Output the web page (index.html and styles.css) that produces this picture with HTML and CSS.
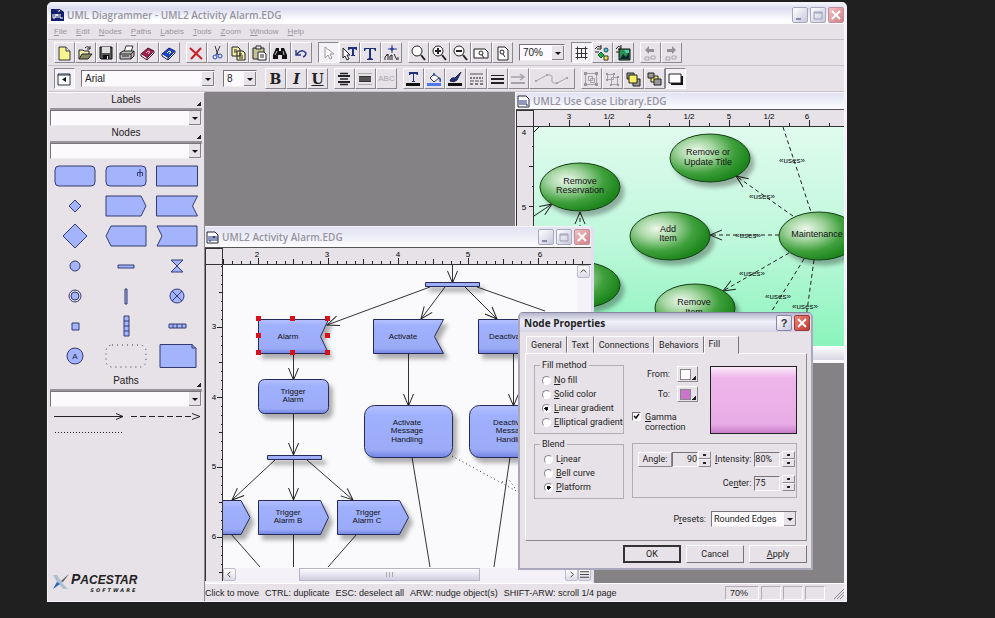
FILE: index.html
```html
<!DOCTYPE html>
<html lang="en">
<head>
  <meta charset="UTF-8">
  <meta name="viewport" content="width=device-width, initial-scale=1.0">
  <title>UML Diagrammer</title>
  <link rel="stylesheet" href="styles.css">
</head>
<body>
  <div class="app">
    <header class="titlebar">
      <svg class="app-icon" viewBox="0 0 13 13"><path fill="#10206c" d="M0 1h9l4 3v9H0z"/><path fill="#fff" d="M3 0l4 3 3-2-2 3z"/><path d="M2 6v4h2V6M5 10V6l1 2 1-2v4M9 6v4h3" fill="none" stroke="#fff"/></svg>
      <h1>UML Diagrammer - UML2 Activity Alarm.EDG</h1>
      <div class="win-buttons">
        <button aria-label="Minimize"><svg viewBox="0 0 14 14"><path d="M3 10h5v2H3z" fill="#888ca8"/></svg></button>
        <button aria-label="Maximize"><svg viewBox="0 0 14 14"><path d="M3 4h8v7H3zM3 5h8" fill="none" stroke="#9a9eb4"/></svg></button>
        <button class="close" aria-label="Close"><svg viewBox="0 0 14 14"><path d="M3 3l8 8M11 3l-8 8" stroke="#fff" stroke-width="2"/></svg></button>
      </div>
    </header>

    <nav class="menubar">
      <button><u>F</u>ile</button>
      <button><u>E</u>dit</button>
      <button><u>N</u>odes</button>
      <button><u>P</u>aths</button>
      <button><u>L</u>abels</button>
      <button><u>T</u>ools</button>
      <button><u>Z</u>oom</button>
      <button><u>W</u>indow</button>
      <button><u>H</u>elp</button>
    </nav>

    <div class="toolbar">
      <div class="group">
        <button aria-label="New"><svg viewBox="0 0 18 18"><path d="M4 3h7l4 4v9H4z" fill="#f8f490" stroke="#333"/><path d="M11 3v4h4" fill="#fff" stroke="#333"/></svg></button>
        <button aria-label="Open"><svg viewBox="0 0 18 18"><path d="M3 15V6h4l1 1h5v3" fill="#f4f0b0" stroke="#222"/><path d="M3 15l3-5h10l-4 5z" fill="#888a60" stroke="#222"/><path d="M9 4q3-3 5 1M14 2v3h-3" fill="none" stroke="#222"/></svg></button>
        <button aria-label="Save"><svg viewBox="0 0 18 18"><path d="M3 3h12v12H4l-1-1z" fill="#555" stroke="#111"/><path d="M5 3h8v6H5z" fill="#ddd"/><path d="M6 11h6v4H6z" fill="#111"/><path d="M10 12h1v3h-1z" fill="#eee"/></svg></button>
        <button aria-label="Print"><svg viewBox="0 0 18 18"><path d="M6 8l2-6h7l-2 6z" fill="#fff" stroke="#333"/><path d="M2 9l3-2h11v5l-3 3H2z" fill="#bbb" stroke="#222"/><path d="M2 10h11v5M13 10l3-3M4 12h7" fill="none" stroke="#222"/></svg></button>
        <button aria-label="Library"><svg viewBox="0 0 18 18"><path d="M2 10l7-6 6 3-7 7z" fill="#a02048" stroke="#501030"/><path d="M2 10v2l6 4v-2M8 16l7-7V7" fill="#fff" stroke="#501030"/><path d="M7 9l2-2 2 1-2 2" fill="none" stroke="#fbd"/></svg></button>
        <button aria-label="Help book"><svg viewBox="0 0 18 18"><path d="M2 10l7-6 6 3-7 7z" fill="#1848c8" stroke="#101868"/><path d="M2 10v2l6 4v-2M8 16l7-7V7" fill="#fff" stroke="#101868"/><path d="M7 9l2-2 2 1-2 2" fill="none" stroke="#ff8"/></svg></button>
      </div>
      <div class="group">
        <button aria-label="Delete"><svg viewBox="0 0 18 18"><path d="M3 4l12 11M14 4L4 15" stroke="#c82028" stroke-width="2"/></svg></button>
        <button aria-label="Cut"><svg viewBox="0 0 18 18"><path d="M7 2l3 9M12 2L8 11" stroke="#334" fill="none"/><circle cx="7" cy="13" r="2" fill="none" stroke="#2048c0"/><circle cx="12" cy="12" r="2" fill="none" stroke="#2048c0"/></svg></button>
        <button aria-label="Copy"><svg viewBox="0 0 18 18"><path d="M3 3h6l2 2v7H3zM8 7h6l2 2v7H8z" fill="#f5efa5" stroke="#222"/><path d="M5 6h3M5 8h3M10 10h3M10 12h4M10 14h4" stroke="#222"/></svg></button>
        <button aria-label="Paste"><svg viewBox="0 0 18 18"><path d="M3 4h11v11H3z" fill="#c9c497" stroke="#222"/><path d="M6 2h5v3H6z" fill="#eee" stroke="#222"/><path d="M8 8h6l2 2v6H8z" fill="#fff" stroke="#222"/><path d="M10 11h4M10 13h4" stroke="#222"/></svg></button>
        <button aria-label="Find"><svg viewBox="0 0 18 18"><path d="M5 4h3v3h2V4h3l3 7v4h-5v-4H7v4H2v-4z" fill="#111"/><path d="M4 11l2-4M13 11l-1-4" stroke="#bbb"/></svg></button>
        <button aria-label="Undo"><svg viewBox="0 0 18 18"><path d="M5 10q5-6 9-1 0 3-3 4M4 6v5h5" fill="none" stroke="#28368c" stroke-width="1.4"/></svg></button>
      </div>
      <div class="group">
        <button class="on" aria-label="Select"><svg viewBox="0 0 18 18"><path d="M6 3v11l3-3 2 4 2-1-2-4h4z" fill="#fff" stroke="#999"/></svg></button>
        <button aria-label="Select text"><svg viewBox="0 0 18 18"><path d="M3 4v10l2-2 2 4 2-1-2-4h3z" fill="#fff" stroke="#222"/><path d="M8 3h9v3h-1l-1-1h-1v6h1v1h-4v-1h1V5h-2L9 6H8z" fill="#20307c"/></svg></button>
        <button aria-label="Text"><svg viewBox="0 0 18 18"><path d="M3 4h12v3h-1l-1-2h-3v9l2 1v1H6v-1l2-1V5H5L4 7H3z" fill="#20307c"/></svg></button>
        <button aria-label="Hot point"><svg viewBox="0 0 18 18"><path d="M10 1v8M6 5h9" stroke="#28368c"/><path d="M8 5l2-2 2 2-2 2z" fill="#28368c"/><path d="M3 16v-3l3-3v6M8 16v-4l2-1v5M12 10l3 6M5 10v2M16 13v3" fill="none" stroke="#222"/></svg></button>
      </div>
      <div class="group">
        <button aria-label="Zoom"><svg viewBox="0 0 18 18"><circle cx="8" cy="7" r="5" fill="#fff" stroke="#222"/><path d="M12 11l4 5" stroke="#222" stroke-width="2"/></svg></button>
        <button aria-label="Zoom in"><svg viewBox="0 0 18 18"><circle cx="8" cy="7" r="5" fill="#fff" stroke="#222"/><path d="M12 11l4 5M5 7h6M8 4v6" stroke="#222" stroke-width="2"/></svg></button>
        <button aria-label="Zoom out"><svg viewBox="0 0 18 18"><circle cx="8" cy="7" r="5" fill="#fff" stroke="#222"/><path d="M12 11l4 5M5 7h6" stroke="#222" stroke-width="2"/></svg></button>
        <button aria-label="Fit width"><svg viewBox="0 0 18 18"><path d="M2 5h11l3 3v6H2z" fill="#fff" stroke="#222"/><circle cx="9" cy="9" r="2" fill="none" stroke="#222"/><path d="M10 11l2 3" stroke="#222"/></svg></button>
        <button aria-label="Fit page"><svg viewBox="0 0 18 18"><path d="M5 3h7l3 3v10H5z" fill="#fff" stroke="#222"/><circle cx="9" cy="8" r="2" fill="none" stroke="#222"/><path d="M10 10l2 3" stroke="#222"/></svg></button>
      </div>
      <select class="combo zoom-combo" aria-label="Zoom level"><option>70%</option></select>
      <div class="group">
        <button class="on" aria-label="Grid"><svg viewBox="0 0 18 18"><path d="M3.500 4.500h12M3.500 9.500h12M3.500 13.500h12M5.500 2.500v13M9.500 4.500v9M13.500 2.500v13" fill="none" stroke="#333"/></svg></button>
        <button aria-label="Node style"><svg viewBox="0 0 18 18"><path d="M2 5q2-4 6-2M8 1v4H4M2 8h4" fill="none" stroke="#222"/><path d="M8 8l3 3-3 3-3-3z" fill="#28b040" stroke="#063"/><circle cx="13" cy="6" r="2" fill="#50c8e0" stroke="#245"/><path d="M11 12h4v4h-4z" fill="#f8ec50" stroke="#333"/></svg></button>
        <button aria-label="Picture"><svg viewBox="0 0 18 18"><path d="M5 5h11v11H5z" fill="#2c9050" stroke="#111"/><path d="M6 15l3-5 3 3 3-5v7z" fill="#123"/><path d="M10 6h5v3h-3z" fill="#58c8b0"/><path d="M2 5q2-4 5-2M7 1v4H4M2 8h3" fill="none" stroke="#222"/></svg></button>
      </div>
      <div class="group">
        <button aria-label="Previous"><svg viewBox="0 0 18 18"><path d="M4 6l4-4v3h5v3H8v2z" fill="#929099"/><path d="M4 13h4v3H4zM10 12h4v3h-4z" fill="none" stroke="#aaa7b0"/></svg></button>
        <button aria-label="Next"><svg viewBox="0 0 18 18"><path d="M14 6l-4-4v3H5v3h5v2z" fill="#929099"/><path d="M4 13h4v3H4zM10 12h4v3h-4z" fill="none" stroke="#aaa7b0"/></svg></button>
      </div>
    </div>

    <div class="toolbar format">
      <button class="on" aria-label="Toggle panel"><svg viewBox="0 0 18 18"><path d="M3 4h12v11H3zM3 5h12" fill="#fff" stroke="#234"/><path d="M11 7v5l-4-2.500z" fill="#111"/></svg></button>
      <select class="combo font-combo" aria-label="Font"><option>Arial</option></select>
      <select class="combo size-combo" aria-label="Font size"><option>8</option></select>
      <div class="group">
        <button class="glyph"><b>B</b></button>
        <button class="glyph"><i>I</i></button>
        <button class="glyph"><u>U</u></button>
      </div>
      <div class="group">
        <button aria-label="Center"><svg viewBox="0 0 18 18"><path d="M3 6h12M3 12h12" stroke="#222" stroke-width="2"/><path d="M5 3.500h8M5 9h8M5 14.500h8" stroke="#222" stroke-width="1.500"/></svg></button>
        <button aria-label="Middle"><svg viewBox="0 0 18 18"><path d="M3 6h12v6H3z" fill="#333"/><path d="M3 8h12M3 10h12" stroke="#777"/><path d="M2 3.500h14M2 14.500h14" stroke="#aaa"/></svg></button>
        <button class="glyph small" disabled>ABC</button>
      </div>
      <div class="group">
        <button aria-label="Text color"><svg viewBox="0 0 18 18"><path d="M5 2h9v3h-1l-1-1h-2v7h1v1H8v-1h1V4H7L6 5H5z" fill="#20307c"/><path d="M2 13h14v3H2z" fill="#111"/></svg></button>
        <button aria-label="Fill color"><svg viewBox="0 0 18 18"><path d="M5 8l4-4 5 4-5 4z" fill="#fff" stroke="#335"/><path d="M9 6V3M14 8q2 1 1 4" fill="none" stroke="#2850b0" stroke-width="1.500"/><path d="M2 13h14v3H2z" fill="#5078e8"/></svg></button>
        <button aria-label="Line color"><svg viewBox="0 0 18 18"><path d="M4 11q1-4 5-3l6-6-4 8q-3 3-7 1z" fill="#20307c" stroke="#224"/><path d="M2 13h14v3H2z" fill="#111"/></svg></button>
        <button aria-label="Line style"><svg viewBox="0 0 18 18"><path d="M3 4h13" stroke="#555"/><path d="M3 8h13" stroke="#555" stroke-width="1.500" stroke-dasharray="2 1"/><path d="M3 11h13" stroke="#555" stroke-dasharray="4 1"/><path d="M3 14h13" stroke="#555" stroke-width="1.500" stroke-dasharray="3 2"/></svg></button>
        <button aria-label="Line width"><svg viewBox="0 0 18 18"><path d="M3 5.500h13" stroke="#222"/><path d="M3 9h13M3 13h13" stroke="#222" stroke-width="2"/></svg></button>
        <button aria-label="Arrow"><svg viewBox="0 0 18 18"><path d="M2 7h12M11 4l4 3-4 3" fill="none" stroke="#a5a2aa" stroke-width="1.500"/><path d="M2 13h14" stroke="#a5a2aa" stroke-width="2"/></svg></button>
        <button class="wide" aria-label="Curve"><svg viewBox="0 0 44 18"><path d="M6 11L17 5Q23 4 22 9T27 13L37 8" fill="none" stroke="#a5a2aa"/><path d="M5 10h2v2H5zM16 4h2v2h-2zM26 12h2v2h-2zM36 7h2v2h-2z" fill="#a5a2aa"/></svg></button>
      </div>
      <div class="group">
        <button aria-label="Group"><svg viewBox="0 0 18 18"><path d="M3.500 3.500h11v11h-11zM6.500 6.500h4v4h-4zM8.500 8.500h4v4h-4z" fill="none" stroke="#a5a2aa"/><path d="M2 2h3v3H2zM13 2h3v3h-3zM2 13h3v3H2zM13 13h3v3h-3z" fill="#98959d"/></svg></button>
        <button aria-label="Ungroup"><svg viewBox="0 0 18 18"><path d="M4.500 4.500h6v5h-6zM8.500 7.500h6v7h-6z" fill="none" stroke="#a5a2aa"/><path d="M3 3h2v2H3zM10 3h2v2h-2zM3 9h2v2H3zM14 14h2v2h-2zM7 14h2v2H7zM14 6h2v2h-2z" fill="#98959d"/></svg></button>
        <button aria-label="Bring to front"><svg viewBox="0 0 18 18"><path d="M3 3h7v6H3zM9 9h7v7H9z" fill="#999" stroke="#222"/><path d="M5 5h8v8H5z" fill="#f8f060" stroke="#222"/></svg></button>
        <button aria-label="Send to back"><svg viewBox="0 0 18 18"><path d="M6 6h7v6H6z" fill="#f8f060" stroke="#222"/><path d="M3 3h6v5H3zM9 9h7v6H9z" fill="#999" stroke="#222"/></svg></button>
        <button class="on" aria-label="Shadow"><svg viewBox="0 0 18 18"><path d="M5 6h12v9H5z" fill="#111"/><path d="M3 4h12v9H3z" fill="#fff" stroke="#222"/></svg></button>
      </div>
    </div>

    <div class="main">
      <aside class="sidebar">
        <h2>Labels</h2>
        <select class="combo" aria-label="Labels"><option></option></select>
        <h2>Nodes</h2>
        <select class="combo" aria-label="Nodes"><option></option></select>
        <div class="palette">
          <svg viewBox="0 0 42 22"><rect x="1" y="1" width="40" height="20" rx="4"/></svg>
          <svg viewBox="0 0 42 22"><rect x="1" y="1" width="40" height="20" rx="4"/><path class="line" d="M32.500 11V7.500h5V11M35 12V4"/></svg>
          <svg viewBox="0 0 42 22"><path d="M.5 1h41v20H.5z"/></svg>

          <svg viewBox="0 0 42 22"><path d="M21 5l6 6-6 6-6-6z"/></svg>
          <svg viewBox="0 0 42 22"><path d="M1 1h35l5 10-5 10H1z"/></svg>
          <svg viewBox="0 0 42 22"><path d="M.5 1h41l-5 10 5 10H.5z"/></svg>

          <svg viewBox="0 0 42 24"><path d="M21 0l12 12-12 12L9 12z"/></svg>
          <svg viewBox="0 0 42 22"><path d="M41 1H6L1 11l5 10h35z"/></svg>
          <svg viewBox="0 0 42 22"><path d="M1 1h40v20H1l5-10z"/></svg>

          <svg viewBox="0 0 42 22"><circle cx="21" cy="11" r="5"/></svg>
          <svg viewBox="0 0 42 22"><path d="M13 10h16v3H13z"/></svg>
          <svg viewBox="0 0 42 22"><path d="M15 5h12L15 17h12z"/></svg>

          <svg viewBox="0 0 42 22"><circle class="hollow" cx="21" cy="11" r="6"/><circle cx="21" cy="11" r="4"/></svg>
          <svg viewBox="0 0 42 22"><path d="M20 4h2v15h-2z"/></svg>
          <svg viewBox="0 0 42 22"><circle cx="21" cy="11" r="7"/><path class="line" d="M16 6l10 10M26 6L16 16"/></svg>

          <svg viewBox="0 0 42 22"><path d="M18 8h7v7h-7z"/></svg>
          <svg viewBox="0 0 42 22"><path d="M19 1h5v20h-5zM19 6h5M19 11h5M19 16h5"/></svg>
          <svg viewBox="0 0 42 22"><path d="M13 9h17v4H13zM17 9v4M21 9v4M26 9v4"/></svg>

          <svg viewBox="0 0 42 24"><circle cx="21" cy="12" r="8"/><text x="21" y="15">A</text></svg>
          <svg viewBox="0 0 42 24"><rect class="dotted" x="1" y="1" width="40" height="22" rx="6"/></svg>
          <svg viewBox="0 0 42 24"><path d="M4 .5h32l4 4v19H4z"/><path class="line" d="M36 0v4h4"/></svg>
        </div>
        <h2>Paths</h2>
        <select class="combo" aria-label="Paths"><option></option></select>
        <svg class="paths" viewBox="0 0 152 30">
          <path d="M4 9.500h69M66 6.500l7 3-7 3"/>
          <path d="M81 9.500h63" stroke-dasharray="6 3"/><path d="M142 6.500l8 3-8 3"/>
          <path d="M5 25.500h67" stroke-dasharray="1 2"/>
        </svg>
        <div class="logo">
          <svg viewBox="0 0 18 18"><path d="M1 3h4l4 6 8-7-7 9 6 6h-5l-4-5-6 5 4-7z" fill="#aebfd0"/><path d="M5 10L1 17l7-5z" fill="#2868b0"/><path d="M9 9l8-7-6 8z" fill="#666"/></svg>
          <div>
            <strong>P<small>ACESTAR</small></strong>
            <em>SOFTWARE</em>
          </div>
        </div>
      </aside>

      <div class="content">
        <div class="workspace">

          <section class="window usecase">
            <header class="win-title">
              <svg class="doc-icon" viewBox="0 0 13 13"><path d="M1 1h8l3 3v8H1z" fill="#fff" stroke="#223"/><path d="M3 5v5M5 5v5M7 5v5M9 5v5h2" fill="none" stroke="#20307c"/></svg>
              <h3>UML2 Use Case Library.EDG</h3>
            </header>
            <div class="win-body">
              <div class="corner"></div>
              <svg class="ruler-h" width="310" height="16">
                <defs><pattern id="uh" x="35" width="80" height="16" patternUnits="userSpaceOnUse"><path d="M.5 10v6M20.500 13v3M40.500 10v6M60.500 13v3" stroke="#222"/></pattern></defs>
                <rect width="310" height="16" fill="url(#uh)"/>
                <text x="35" y="9">3</text><text x="75" y="9">1/2</text><text x="115" y="9">4</text><text x="155" y="9">1/2</text><text x="195" y="9">5</text><text x="235" y="9">1/2</text><text x="273" y="9">6</text>
              </svg>
              <svg class="ruler-v" width="18" height="219">
                <defs><pattern id="uv" y="-1" width="18" height="80" patternUnits="userSpaceOnUse"><path d="M12 .5h6M15 20.500h3M12 40.500h6M15 60.500h3" stroke="#222"/></pattern></defs>
                <rect width="18" height="219" fill="url(#uv)"/>
                <text x="7" y="8">4</text><text x="7" y="83">5</text>
              </svg>
              <div class="canvas mint">
                <svg width="310" height="219" viewBox="534 127 310 219">
                  <defs>
                    <radialGradient id="leaf" cx=".33" cy=".35" r=".72"><stop offset="0" stop-color="#edf8ec"/><stop offset=".3" stop-color="#a9d8a6"/><stop offset=".65" stop-color="#3fa03c"/><stop offset="1" stop-color="#178017"/></radialGradient>
                    <filter id="soft" x="-20%" y="-20%" width="150%" height="160%"><feDropShadow dx="4" dy="5" stdDeviation="2" flood-color="#000" flood-opacity=".3"/></filter>
                    <marker id="tip" viewBox="0 0 14 12" refX="13" refY="6" markerWidth="14" markerHeight="12" markerUnits="userSpaceOnUse" orient="auto"><path d="M1 1l12 5-12 5" fill="none" stroke="#222"/></marker>
                  </defs>
                  <g class="dashed" marker-end="url(#tip)">
                    <path d="M793 216L736 176"/><path d="M779 235h-69"/><path d="M789 253L723 291"/><path d="M580 250V212"/>
                  </g>
                  <g class="dashed"><path d="M783 127L811 212"/><path d="M804 259L765 322"/><path d="M814 260L805 325"/></g>
                  <path d="M534 216L552 204" stroke="#222" marker-end="url(#tip)"/><path d="M534 132l5-5" stroke="#222"/>
                  <g fill="url(#leaf)" stroke="#173d17" filter="url(#soft)">
                    <ellipse cx="580" cy="187" rx="40" ry="24"/><ellipse cx="710" cy="158" rx="40" ry="24"/>
                    <ellipse cx="670" cy="236" rx="40" ry="24"/><ellipse cx="819" cy="236" rx="40" ry="24"/>
                    <ellipse cx="580" cy="285" rx="40" ry="23"/><ellipse cx="695" cy="308" rx="40" ry="24"/>
                  </g>
                  <g class="labels">
                    <text x="580" y="184">Remove</text><text x="580" y="193">Reservation</text>
                    <text x="708" y="155">Remove or</text><text x="708" y="165">Update Title</text>
                    <text x="668" y="232">Add</text><text x="668" y="241">Item</text>
                    <text x="817" y="237">Maintenance</text><text x="694" y="305">Remove</text><text x="694" y="315">Item</text>
                  </g>
                  <g class="labels uses">
                    <text x="792" y="163">«uses»</text><text x="762" y="199">«uses»</text><text x="748" y="238">«uses»</text>
                    <text x="752" y="276">«uses»</text><text x="778" y="299">«uses»</text><text x="805" y="309">«uses»</text>
                  </g>
                </svg>
              </div>
            </div>
            <div class="win-foot"></div>
          </section>

          <section class="window activity">
            <header class="win-title">
              <svg class="doc-icon" viewBox="0 0 13 13"><path d="M1 1h8l3 3v8H1z" fill="#fff" stroke="#223"/><path d="M3 5v5h2V5M7 10V5l1 2 1-2v5M11 5v5" fill="none" stroke="#20307c"/></svg>
              <h3>UML2 Activity Alarm.EDG</h3>
              <div class="win-buttons">
                <button aria-label="Minimize"><svg viewBox="0 0 14 14"><path d="M3 10h5v2H3z" fill="#888ca8"/></svg></button>
                <button aria-label="Maximize"><svg viewBox="0 0 14 14"><path d="M3 4h8v7H3zM3 5h8" fill="none" stroke="#9a9eb4"/></svg></button>
                <button class="close" aria-label="Close"><svg viewBox="0 0 14 14"><path d="M3 3l8 8M11 3l-8 8" stroke="#fff" stroke-width="2"/></svg></button>
              </div>
            </header>
            <div class="win-body">
              <div class="corner"></div>
              <svg class="ruler-h" width="368" height="16">
                <defs><pattern id="ah" x="35" width="70" height="16" patternUnits="userSpaceOnUse"><path d="M.5 10v6M9.500 13v3M18.500 13v3M27.500 13v3M35.500 11v5M44.500 13v3M53.500 13v3M62.500 13v3" stroke="#222"/></pattern></defs>
                <rect width="368" height="16" fill="url(#ah)"/>
                <text x="34" y="9">2</text><text x="104" y="9">3</text><text x="175" y="9">4</text><text x="245" y="9">5</text><text x="317" y="9">6</text>
              </svg>
              <svg class="ruler-v" width="18" height="316">
                <defs><pattern id="av" y="62" width="18" height="70" patternUnits="userSpaceOnUse"><path d="M11 .5h7M15 9.500h3M15 18.500h3M15 27.500h3M13 35.500h5M15 44.500h3M15 53.500h3M15 62.500h3" stroke="#222"/></pattern></defs>
                <rect width="18" height="316" fill="url(#av)"/>
                <text x="8" y="64">3</text><text x="8" y="135">4</text><text x="8" y="204">5</text><text x="8" y="274">6</text>
              </svg>
              <div class="canvas scrolled">
                <svg width="354" height="302" viewBox="223 265 354 302">
                  <defs>
                    <linearGradient id="blue" x2="0" y2="1"><stop offset="0" stop-color="#b4c0ff"/><stop offset=".2" stop-color="#9fb0fc"/><stop offset=".85" stop-color="#9babf8"/><stop offset="1" stop-color="#7284e0"/></linearGradient>
                    <marker id="head" viewBox="0 0 14 12" refX="13" refY="6" markerWidth="14" markerHeight="12" markerUnits="userSpaceOnUse" orient="auto"><path d="M1 1l12 5-12 5" fill="none" stroke="#222"/></marker>
                  </defs>
                  <g class="flow" marker-end="url(#head)">
                    <path d="M452.500 265V283"/><path d="M430 287L327 325"/><path d="M445 287L421 319"/><path d="M465 287L497 319"/>
                    <path d="M293.500 354V380"/><path d="M293.500 414V455"/><path d="M275 460L232 500"/><path d="M293.500 460V500"/><path d="M307 460L353 500"/>
                    <path d="M408.500 354V406"/><path d="M513.500 354V406"/>
                  </g>
                  <g class="flow">
                    <path d="M477 287L545 311M231 534L260 567M293.500 534V567M357 534L328 567M412 457L430 567M510 457L494 567"/>
                    <path d="M452 456L520 493M502 482l7-2 6 8" stroke-dasharray="1 3"/>
                  </g>
                  <g fill="url(#blue)" stroke="#252a58" filter="url(#soft)">
                    <path d="M425.500 282.500h54v4h-54z"/><path d="M267.500 455.500h54v4h-54z"/>
                    <path d="M258.500 319.500h70l-8 17 8 17h-70z"/><path d="M373.500 319.500h70l-9 17 9 17h-70z"/><path d="M478.500 319.500h70l-9 17 9 17h-70z"/>
                    <rect x="258.500" y="379.500" width="70" height="34" rx="6"/>
                    <rect x="364.500" y="405.500" width="88" height="52" rx="10"/><rect x="469.500" y="405.500" width="88" height="52" rx="10"/>
                    <path d="M200 500.500h41l9 17-9 17h-41z"/><path d="M258.500 500.500h62l8 17-8 17h-62z"/><path d="M337.500 500.500h62l9 17-9 17h-62z"/>
                  </g>
                  <g class="labels">
                    <text x="288" y="339">Alarm</text><text x="403" y="339">Activate</text><text x="508" y="339">Deactivate</text>
                    <text x="293" y="394">Trigger</text><text x="293" y="402">Alarm</text>
                    <text x="407" y="425">Activate</text><text x="407" y="433">Message</text><text x="407" y="442">Handling</text>
                    <text x="512" y="425">Deactivate</text><text x="512" y="433">Message</text><text x="512" y="442">Handling</text>
                    <text x="288" y="515">Trigger</text><text x="288" y="523">Alarm B</text>
                    <text x="368" y="515">Trigger</text><text x="367" y="523">Alarm C</text>
                  </g>
                  <path class="handles" d="M256 316h5v5h-5zM290 316h5v5h-5zM325 316h5v5h-5zM256 333h5v5h-5zM325 333h5v5h-5zM256 350h5v5h-5zM290 350h5v5h-5zM325 350h5v5h-5z"/>
                </svg>
                <div class="vscroll"><button aria-label="Scroll up"><svg viewBox="0 0 12 12"><path d="M3 7l3-3 3 3" /></svg></button></div>
                <div class="hscroll">
                  <button aria-label="Scroll left"><svg viewBox="0 0 12 12"><path d="M7 3L4 6l3 3"/></svg></button>
                  <div class="track"><div class="thumb"></div></div>
                  <button aria-label="Scroll right"><svg viewBox="0 0 12 12"><path d="M5 3l3 3-3 3"/></svg></button>
                  <button aria-label="Pages"><svg viewBox="0 0 12 12"><path d="M1 3h10M1 6h10M1 9h10"/></svg></button>
                </div>
              </div>
            </div>
          </section>

          <form class="dialog">
            <header class="dialog-title">
              <h3>Node Properties</h3>
              <div class="win-buttons">
                <button type="button" class="help">?</button>
                <button type="button" class="close" aria-label="Close"><svg viewBox="0 0 14 14"><path d="M3 3l8 8M11 3l-8 8" stroke="#fff" stroke-width="2"/></svg></button>
              </div>
            </header>
            <div class="tabs">
              <button type="button">General</button>
              <button type="button">Text</button>
              <button type="button">Connections</button>
              <button type="button">Behaviors</button>
              <button type="button" class="active">Fill</button>
            </div>
            <div class="panel">
              <div class="left">
                <fieldset>
                  <legend>Fill method</legend>
                  <label><input type="radio" name="fill"><span><u>N</u>o fill</span></label>
                  <label><input type="radio" name="fill"><span><u>S</u>olid color</span></label>
                  <label><input type="radio" name="fill" checked><span><u>L</u>inear gradient</span></label>
                  <label><input type="radio" name="fill"><span><u>E</u>lliptical gradient</span></label>
                </fieldset>
                <fieldset>
                  <legend>Blend</legend>
                  <label><input type="radio" name="blend"><span>L<u>i</u>near</span></label>
                  <label><input type="radio" name="blend"><span><u>B</u>ell curve</span></label>
                  <label><input type="radio" name="blend" checked><span><u>P</u>latform</span></label>
                </fieldset>
              </div>
              <div class="right">
                <div class="colors">
                  <div class="pickers">
                    <div class="pick"><label for="from">From:</label><button type="button" id="from"><span class="swatch"></span></button></div>
                    <div class="pick"><label for="to">To:</label><button type="button" id="to"><span class="swatch orchid"></span></button></div>
                    <label class="gamma"><input type="checkbox" checked><span><u>G</u>amma<br>correction</span></label>
                  </div>
                  <div class="preview"></div>
                </div>
                <div class="numbers">
                  <div class="angle"><button type="button" class="angle-button">Angle:</button><input type="text" value="90" aria-label="Angle"><span class="spin"><button type="button" aria-label="Up"></button><button type="button" aria-label="Down"></button></span></div>
                  <div class="field"><label for="intensity"><u>I</u>ntensity:</label><input id="intensity" type="text" value="80%"><span class="spin"><button type="button" aria-label="Up"></button><button type="button" aria-label="Down"></button></span></div>
                  <div class="field"><label for="center">Ce<u>n</u>ter:</label><input id="center" type="text" value="75"><span class="spin"><button type="button" aria-label="Up"></button><button type="button" aria-label="Down"></button></span></div>
                </div>
                <div class="presets">
                  <label for="presets">P<u>r</u>esets:</label>
                  <select id="presets" class="combo"><option>Rounded Edges</option></select>
                </div>
              </div>
            </div>
            <div class="actions">
              <button type="button" class="default">OK</button>
              <button type="button">Cancel</button>
              <button type="button"><u>A</u>pply</button>
            </div>
          </form>
        </div>

        <footer class="status">
          <span>Click to move</span><span>CTRL: duplicate</span><span>ESC: deselect all</span><span>ARW: nudge object(s)</span><span>SHIFT-ARW: scroll 1/4 page</span>
          <span class="cell percent">70%</span><span class="cell"></span><span class="cell"></span><span class="cell"></span>
          <svg class="grip" viewBox="0 0 12 12"><path d="M2 12L12 2M5 12l7-7M8 12l4-4" stroke="#8c8890"/></svg>
        </footer>
      </div>
    </div>
  </div>
</body>
</html>
```
FILE: styles.css
```css
:root {
  --face: #e7e2e8;
  --text: #222;
  --ui: Roboto, "Liberation Sans", sans-serif;
}

* {
  margin: 0;
  padding: 0;
  box-sizing: border-box;
}

body {
  font-family: "Liberation Sans", Arial, sans-serif;
  font-size: 9px;
  color: var(--text);
  background: #202020;
  min-height: 100vh;
  padding: 2px 148px 16px 47px;
  display: flex;
}

button, select, input {
  font: inherit;
  color: inherit;
}

svg {
  display: block;
}

.app {
  flex: 1;
  min-width: 0;
  display: flex;
  flex-direction: column;
  background: var(--face);
  border: 1px solid #f6f4fa;
  border-right: 3px solid #f6f4fa;
  border-radius: 5px 5px 0 0;
}

/* title bars */
.titlebar {
  display: flex;
  align-items: center;
  gap: 3px;
  height: 21px;
  padding: 2px 0 0 3px;
  background: linear-gradient(#f4f4fc, #dcdcf0 25%, #fdfdff 80%);
  border-radius: 5px 5px 0 0;
}

.app-icon, .doc-icon {
  width: 13px;
  height: 13px;
}

h1, h3 {
  flex: 1;
  font-family: "Open Sans", sans-serif;
  font-size: 10px;
  font-weight: 600;
  color: #96949e;
  white-space: nowrap;
}

.win-buttons {
  display: flex;
  gap: 2px;
}

.win-buttons button {
  width: 16px;
  height: 16px;
  border: 1px solid #a8a8bc;
  border-radius: 2px;
  background: linear-gradient(135deg, #fff, #c8c8dc);
}

.win-buttons .close {
  border-color: #c09098;
  background: linear-gradient(135deg, #f0c0c0, #d08088);
}

/* menu */
.menubar {
  display: flex;
  gap: 9px;
  height: 16px;
  padding: 0 6px;
  font-size: 8px;
  border-bottom: 1px solid #c4c0c8;
}

.menubar button {
  border: 0;
  background: none;
  color: #9a969f;
}

/* toolbars */
.toolbar {
  display: flex;
  align-items: center;
  gap: 6px;
  height: 26px;
  padding-left: 6px;
  border-bottom: 1px solid #c8c4cc;
}

.toolbar .group {
  display: flex;
}

.toolbar button {
  width: 21px;
  height: 21px;
  border: 1px solid;
  border-color: #fff #8c8890 #8c8890 #fff;
  background: var(--face);
}

.toolbar button svg {
  width: 18px;
  height: 18px;
}

.toolbar .on {
  border-color: #8c8890 #fff #fff #8c8890;
  background: #f4f2f6;
}

.toolbar .wide {
  width: 46px;
}

.toolbar .wide svg {
  width: 44px;
}

.toolbar .glyph {
  font-family: "DejaVu Serif", serif;
  font-size: 14px;
  font-weight: 700;
  line-height: 18px;
}

.toolbar .small {
  font-family: "Liberation Sans", sans-serif;
  font-size: 8px;
  font-weight: 400;
  color: #aaa7b0;
}

.combo {
  appearance: none;
  height: 16px;
  padding-left: 3px;
  border: 1px solid;
  border-color: #77737b #eee #eee #77737b;
  border-radius: 0;
  background: #fcfafc url("data:image/svg+xml,%3Csvg xmlns='http://www.w3.org/2000/svg' width='12' height='14'%3E%3Cpath d='M0 0h12v14H0z' fill='%23e7e2e8'/%3E%3Cpath d='M11.500 0v13.500H0' fill='none' stroke='%23848088'/%3E%3Cpath d='M3 6h6L6 9z' fill='%23111'/%3E%3C/svg%3E") no-repeat right center;
}

.toolbar .combo {
  height: 17px;
  font-size: 10px;
}

.zoom-combo {
  width: 46px;
}

.font-combo {
  width: 134px;
}

.size-combo {
  width: 34px;
  margin: 0 2px;
}

.main {
  flex: 1;
  display: flex;
}

/* sidebar */
.sidebar {
  width: 157px;
  display: flex;
  flex-direction: column;
  padding: 0 2px 2px;
  border-top: 1px solid #fff;
  border-right: 1px solid #8c8890;
}

.sidebar h2 {
  height: 17px;
  font-size: 10px;
  font-weight: 400;
  line-height: 14px;
  text-align: center;
  border-bottom: 2px solid #98949c;
  background: linear-gradient(135deg, transparent 50%, #222 50%) no-repeat right 1px bottom 2px / 4px 4px;
}

.sidebar .combo {
  width: 100%;
}

.palette {
  display: grid;
  grid-template-columns: repeat(3, 1fr);
  grid-auto-rows: 30px;
  align-items: center;
  justify-items: center;
  padding: 2px 0 3px;
}

.palette svg {
  width: 42px;
  fill: #a3b4fc;
  stroke: #353a70;
}

.palette .hollow, .palette .line, .palette .dotted {
  fill: none;
}

.palette .dotted {
  stroke: #333;
  stroke-dasharray: 1 4;
}

.palette text {
  fill: #223;
  stroke: none;
  font-size: 8px;
  text-anchor: middle;
}

.paths {
  width: 152px;
  height: 30px;
  fill: none;
  stroke: #222;
}

.logo {
  display: flex;
  gap: 1px;
  margin-top: auto;
  padding: 0 0 5px 2px;
}

.logo svg {
  width: 18px;
  height: 18px;
}

.logo strong, .logo em {
  display: block;
  font-style: italic;
}

.logo strong {
  font-size: 14px;
  line-height: 14px;
}

.logo small {
  font-size: 12px;
}

.logo em {
  font-family: "DejaVu Sans", sans-serif;
  font-size: 5px;
  font-weight: 700;
  line-height: 7px;
  text-align: right;
  letter-spacing: 2px;
}

/* workspace */
.content {
  flex: 1;
  min-width: 0;
  display: flex;
  flex-direction: column;
}

.workspace {
  position: relative;
  flex: 1;
  overflow: hidden;
  background: #848284;
}

.window {
  position: absolute;
  display: flex;
  flex-direction: column;
  background: #eceaf2;
  border: 1px solid #f4f4fa;
}

.win-title {
  display: flex;
  align-items: center;
  gap: 3px;
  height: 20px;
  padding: 0 1px;
  background: linear-gradient(#e2e2f2, #fcfcff);
}

.usecase {
  left: 310px;
  top: 0;
  right: 0;
  border-right: 0;
}

.usecase .win-title {
  height: 16px;
}

.activity {
  left: -1px;
  top: 134px;
  bottom: 0;
  width: 390px;
  border-radius: 0 5px 0 0;
  border-right: 3px solid #e2e0ee;
}

.win-body {
  flex: 1;
  display: grid;
  grid-template: 17px 1fr / 18px 1fr;
  border-top: 1px solid #555;
  overflow: hidden;
}

.corner {
  background: var(--face);
  border: 1px solid #333;
}

.ruler-h {
  width: 100%;
  height: 17px;
  background: var(--face);
  border-bottom: 1px solid #333;
}

.ruler-v {
  background: var(--face);
  border: solid #333;
  border-width: 0 1px;
}

.ruler-h text, .ruler-v text {
  font-size: 8px;
  text-anchor: middle;
}

.canvas {
  overflow: hidden;
}

.mint {
  background: linear-gradient(#e0fbee, #c0f8dc 50%, #8af4bc);
}

.scrolled {
  display: grid;
  grid-template: 1fr 14px / 1fr 14px;
  background: #fafafc;
}

.dashed {
  fill: none;
  stroke: #222;
}

.dashed path {
  stroke-dasharray: 4 3;
}

.flow {
  fill: none;
  stroke: #333;
}

.labels {
  font-size: 8px;
  text-anchor: middle;
  fill: #111;
}

.mint .labels {
  font-size: 9px;
}

.mint .uses {
  font-size: 8px;
}

.handles {
  fill: #d8101c;
}

.win-foot {
  height: 16px;
  border-bottom: 2px solid #fff;
  background: linear-gradient(#fff, #d8d6e2);
}

.vscroll, .hscroll {
  background: #f4f2f8;
}

.vscroll button, .hscroll button {
  width: 13px;
  height: 13px;
  border: 1px solid #c0bccc;
  border-radius: 2px;
  background: linear-gradient(#fff, #dcdae6);
}

.vscroll svg, .hscroll svg {
  fill: none;
  stroke: #333;
}

.hscroll {
  grid-column: 1 / 3;
  display: flex;
}

.track {
  flex: 1;
  padding: 0 23% 0 17%;
}

.thumb {
  height: 13px;
  border: 1px solid #b8b4c6;
  background: repeating-linear-gradient(90deg, #aaa 0 1px, transparent 1px 3px) no-repeat center / 7px 5px, linear-gradient(#fdfcff, #d0cee0);
}

/* dialog */
.dialog {
  position: absolute;
  left: 313px;
  top: 220px;
  width: 295px;
  padding: 0 4px 5px 5px;
  font-family: var(--ui);
  background: var(--face);
  border: 2px solid #aaa8bc;
  border-top: 1px solid #8a88a0;
  border-radius: 5px 5px 0 0;
}

.dialog-title {
  display: flex;
  align-items: center;
  height: 19px;
  margin: 0 -4px 0 -5px;
  padding: 0 1px 0 4px;
  background: linear-gradient(#b4b4cc, #f0f0fa 45%, #d6d4e4);
}

.dialog-title h3 {
  font-weight: 700;
  color: #222;
}

.dialog-title .win-buttons button {
  border-color: #8884a8;
}

.dialog-title .help {
  font-family: "Liberation Sans", sans-serif;
  font-size: 11px;
  font-weight: 700;
  line-height: 12px;
  color: #334;
}

.dialog-title .win-buttons .close {
  border-color: #a03838;
  background: linear-gradient(135deg, #e88878, #c03830);
}

.tabs {
  display: flex;
  padding: 4px 0 0 1px;
}

.tabs button {
  height: 17px;
  padding: 0 4px;
  border: 1px solid;
  border-color: #fff #77737b transparent #fff;
  background: none;
}

.tabs .active {
  width: 35px;
  height: 18px;
  margin-bottom: -1px;
  padding-bottom: 3px;
  text-align: left;
  background: var(--face);
}

.panel {
  display: grid;
  grid-template-columns: 90px 1fr;
  gap: 8px;
  padding: 6px 9px 13px 8px;
  border: 1px solid;
  border-color: #fff #8c8890 #8c8890 #fff;
}

fieldset {
  min-width: 0;
  padding: 2px 0 4px 7px;
  border: 1px solid #b0acb4;
}

fieldset + fieldset {
  margin-top: 5px;
}

fieldset + fieldset label {
  padding-left: 2px;
}

legend {
  padding: 0 2px;
  margin-left: -2px;
  line-height: 11px;
}

fieldset label {
  display: flex;
  align-items: center;
  gap: 3px;
  height: 14px;
  white-space: nowrap;
}

input[type="radio"] {
  appearance: none;
  flex: none;
  width: 9px;
  height: 9px;
  border: 1px solid;
  border-color: #8c8890 #fff #fff #8c8890;
  border-radius: 50%;
  background: #fff;
}

input[type="radio"]:checked {
  background: radial-gradient(#111 0 2px, #fff 2px);
}

.right {
  min-width: 0;
}

.colors {
  display: flex;
  justify-content: space-between;
  padding-top: 6px;
}

.pickers {
  width: 66px;
}

.pick {
  display: flex;
  align-items: center;
  justify-content: flex-end;
  gap: 7px;
  height: 16px;
  margin-bottom: 4px;
}

.pick button {
  width: 21px;
  height: 16px;
  padding: 1px 2px;
  border: 1px solid;
  border-color: #fff #8c8890 #8c8890 #fff;
  background: linear-gradient(135deg, transparent 50%, #222 50%) no-repeat right 1px bottom 1px / 4px 4px;
}

.swatch {
  display: block;
  width: 11px;
  height: 11px;
  border: 1px solid #88848c;
  background: #fff;
}

.orchid {
  background: #cc74cc;
}

.gamma {
  display: flex;
  gap: 4px;
  margin-top: 10px;
  line-height: 10px;
}

.gamma input {
  appearance: none;
  width: 9px;
  height: 9px;
  border: 1px solid;
  border-color: #77737b #fff #fff #77737b;
  background: #fff;
}

.gamma input:checked {
  background: #fff url("data:image/svg+xml,%3Csvg xmlns='http://www.w3.org/2000/svg' width='7' height='7'%3E%3Cpath d='M1 3l2 2 3-4' fill='none' stroke='%23111' stroke-width='1.500'/%3E%3C/svg%3E") no-repeat;
}

.preview {
  width: 87px;
  height: 68px;
  border: 1px solid #222;
  background: linear-gradient(#fbeafb, #eeb6ea 16%, #e8ace6 86%, #c87fc8);
}

.numbers {
  display: grid;
  grid-template-columns: 1fr auto;
  gap: 8px 4px;
  margin-top: 9px;
  padding: 7px 4px 6px 5px;
  border: 1px solid #b0acb4;
}

.angle, .field {
  display: flex;
  align-items: center;
}

.field {
  grid-column: 2;
  justify-content: flex-end;
}

.angle-button {
  width: 34px;
  height: 15px;
  border: 1px solid;
  border-color: #fff #8c8890 #8c8890 #fff;
  background: none;
}

.angle input, .field input {
  width: 26px;
  height: 15px;
  border: 1px solid;
  border-color: #77737b #fff #fff #77737b;
  background: var(--face);
}

.angle input {
  text-align: right;
}

.field input {
  margin: 0 2px 0 3px;
}

.spin {
  width: 13px;
}

.spin button {
  display: block;
  width: 13px;
  height: 8px;
  border: 1px solid;
  border-color: #fff #8c8890 #8c8890 #fff;
  background: linear-gradient(#222, #222) no-repeat center / 3px 2px;
}

.presets {
  display: flex;
  align-items: center;
  justify-content: flex-end;
  gap: 5px;
  margin-top: 13px;
}

.presets .combo {
  width: 86px;
  padding-left: 2px;
}

.actions {
  display: flex;
  justify-content: flex-end;
  gap: 5px;
  padding-top: 4px;
}

.actions button {
  width: 58px;
  height: 18px;
  border: 1px solid;
  border-color: #fff #77737b #77737b #fff;
  background: none;
}

.actions .default {
  border: 2px solid #333;
}

/* status bar */
.status {
  display: flex;
  align-items: center;
  gap: 6px;
  height: 18px;
  white-space: nowrap;
  border-top: 1px solid #fff;
}

.cell {
  width: 20px;
  height: 14px;
  margin-right: -4px;
  line-height: 12px;
  border: 1px solid;
  border-color: #b0acb4 #fff #fff #b0acb4;
}

.percent {
  width: 34px;
  margin-left: auto;
  padding-left: 4px;
}

.grip {
  width: 12px;
  height: 12px;
  margin-left: 5px;
}
```
